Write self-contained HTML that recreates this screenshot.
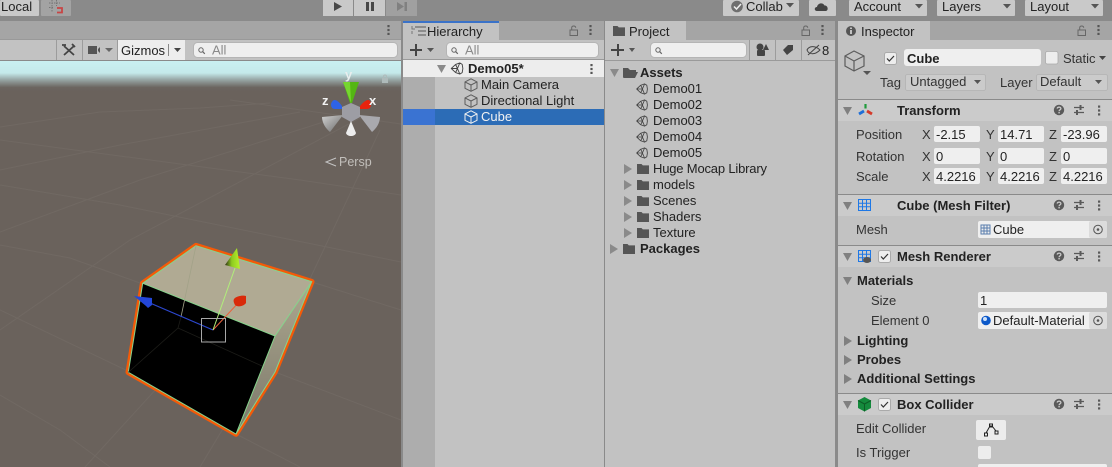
<!DOCTYPE html>
<html><head><meta charset="utf-8"><style>
html,body{margin:0;padding:0;background:#8a8a8a;width:1112px;height:467px;overflow:hidden}
svg{display:block;filter:blur(.3px)}
text{font-family:"Liberation Sans",sans-serif;font-size:13px;fill:#222}
.b{font-weight:bold}
.l{fill:#333}
.g{fill:#8a8a8a}
</style></head><body>
<svg width="1112" height="467" viewBox="0 0 1112 467" xmlns="http://www.w3.org/2000/svg">
<defs>
<linearGradient id="sky" x1="0" y1="0" x2="0" y2="1"><stop offset="0" stop-color="#c9f0f1"/><stop offset=".4" stop-color="#c4e9ea"/><stop offset=".62" stop-color="#98a7a6"/><stop offset=".88" stop-color="#6b6560"/><stop offset="1" stop-color="#6a625c"/></linearGradient>
<linearGradient id="side" x1="0" y1="0" x2="0" y2="1"><stop offset="0" stop-color="#ada78f"/><stop offset="1" stop-color="#7b786a"/></linearGradient>
<linearGradient id="gc" x1="0" y1="0" x2="1" y2="0"><stop offset="0" stop-color="#2f2f18"/><stop offset=".45" stop-color="#8ecb20"/><stop offset="1" stop-color="#b7f02c"/></linearGradient>
<linearGradient id="cone" x1="0" y1="0" x2="1" y2="1"><stop offset="0" stop-color="#d0d0d0"/><stop offset="1" stop-color="#6a6a6a"/></linearGradient>
<symbol id="cube" viewBox="0 0 14 14" overflow="visible"><path d="M7 .8 13 3.9V10.3L7 13.3 1 10.3V3.9ZM1 3.9 7 7 13 3.9M7 7V13.3" fill="none" stroke="#5c5c5c" stroke-width="1" stroke-linejoin="round"/></symbol>
<symbol id="unity" viewBox="0 0 14 14" overflow="visible"><path d="M.8 7 5.500 2.600 10 1 12.600 2.600 13.300 7 12.600 11.400 10 13 5.500 11.400ZM.8 7H7.500L10 1M7.500 7 10 13M5.500 2.600 7.500 7M5.500 11.400 7.500 7" fill="none" stroke="#444" stroke-width="1" stroke-linejoin="round"/></symbol>
<symbol id="folder" viewBox="0 0 12 10" overflow="visible"><path d="M0 0H4.500L5.800 1.400H12V10H0Z" fill="#555"/></symbol>
<symbol id="dots" viewBox="0 0 3 10" overflow="visible"><rect x=".4" y="0" width="2.200" height="2.200" fill="#555"/><rect x=".4" y="3.900" width="2.200" height="2.200" fill="#555"/><rect x=".4" y="7.800" width="2.200" height="2.200" fill="#555"/></symbol>
<symbol id="help" viewBox="0 0 30 14" overflow="visible">
<circle cx="5" cy="7" r="5.200" fill="#5a5a5a"/><path d="M3.200 5.600C3.400 3.600 6.900 3.600 6.900 5.600 6.900 6.900 5.100 6.800 5.100 8.200" fill="none" stroke="#cbcbcb" stroke-width="1.300"/><rect x="4.400" y="9" width="1.400" height="1.400" fill="#cbcbcb"/>
<path d="M20 4.500H30M20 9.500H30" stroke="#5a5a5a" stroke-width="1.300" fill="none"/><path d="M26.500 2V7M23 7V12" stroke="#5a5a5a" stroke-width="2" fill="none"/>
<rect x="44" y="2.500" width="2.200" height="2.200" fill="#5a5a5a"/><rect x="44" y="6.400" width="2.200" height="2.200" fill="#5a5a5a"/><rect x="44" y="10.300" width="2.200" height="2.200" fill="#5a5a5a"/></symbol>
<symbol id="lock" viewBox="0 0 10 12" overflow="visible"><rect x="1" y="5" width="7.500" height="5.500" fill="none" stroke="#666" stroke-width="1"/><path d="M2.700 5V2.800C2.700 .4 6.700 .4 6.700 2.800" fill="none" stroke="#666" stroke-width="1"/></symbol>
<symbol id="search" viewBox="0 0 12 8" overflow="visible"><circle cx="3" cy="3" r="2.200" fill="none" stroke="#666" stroke-width="1"/><path d="M4.600 4.600 6.800 6.800" stroke="#666" stroke-width="1.200"/></symbol>
<symbol id="mesh" viewBox="0 0 13 12" overflow="visible"><path d="M.5.5H12.500V11.500H.5ZM4.500.5V11.500M8.500.5V11.500M.5 4.200H12.500M.5 7.800H12.500" fill="none" stroke="#1e78e6" stroke-width="1"/></symbol>
<symbol id="check" viewBox="0 0 13 13" overflow="visible"><rect x=".5" y=".5" width="12" height="12" rx="2" fill="#ededed" stroke="#aaa"/><path d="M3 6.500 5.300 9 10 4" fill="none" stroke="#333" stroke-width="1.200"/></symbol>
</defs>

<!-- base -->
<rect width="1112" height="467" fill="#8a8a8a"/>

<!-- top toolbar -->
<rect x="0" y="0" width="39" height="16" rx="1" fill="#c9c9c9"/>
<text x="1" y="11">Local</text>
<rect x="41" y="0" width="30" height="16" rx="1" fill="#a3a3a3"/>
<path d="M52 0V12M56.500 0V6M49 3H60M49 7.500H54" stroke="#767676" stroke-width="1" stroke-dasharray="1.500 1"/>
<path d="M57 8H62V12.500H57" fill="none" stroke="#c84545" stroke-width="1.800"/>
<rect x="323" y="0" width="30" height="16" fill="#c9c9c9"/><rect x="354" y="0" width="31" height="16" fill="#c9c9c9"/><rect x="386" y="0" width="31" height="16" fill="#a0a0a0"/>
<path d="M334 2 342 6.500 334 11Z" fill="#484848"/><path d="M366 2H369V11H366ZM371 2H374V11H371Z" fill="#484848"/>
<path d="M397 2 404 6.500 397 11ZM404.500 2H407V11H404.500Z" fill="#808080"/>
<rect x="723" y="0" width="76" height="16" rx="1" fill="#c9c9c9"/>
<circle cx="737" cy="6.500" r="5.800" fill="#6f6f6f"/><path d="M734 6.500 736.500 9 741 4" fill="none" stroke="#eee" stroke-width="1.500"/>
<text x="746" y="11">Collab</text><path d="M786 3H794L790 7.500Z" fill="#555"/>
<rect x="809" y="0" width="27" height="16" rx="1" fill="#c9c9c9"/>
<path d="M817 11C814 11 814 7 817 7 817.500 3 823 2 824.500 5.500 828 5 829 11 825.500 11Z" fill="#444"/>
<rect x="849" y="0" width="78" height="16" rx="1" fill="#c9c9c9"/><text x="854" y="11">Account</text><path d="M915 4H923L919 8.500Z" fill="#555"/>
<rect x="937" y="0" width="78" height="16" rx="1" fill="#c9c9c9"/><text x="942" y="11">Layers</text><path d="M1003 4H1011L1007 8.500Z" fill="#555"/>
<rect x="1025" y="0" width="78" height="16" rx="1" fill="#c9c9c9"/><text x="1030" y="11">Layout</text><path d="M1091 4H1099L1095 8.500Z" fill="#555"/>

<!-- scene panel -->
<rect x="0" y="21" width="401" height="19" fill="#a5a5a5"/>
<rect x="0" y="39" width="401" height="21" fill="#c2c2c2"/>
<rect x="0" y="39" width="401" height="1" fill="#999"/>
<use href="#dots" x="387" y="25" width="3" height="10"/>
<rect x="56" y="40" width="1" height="20" fill="#9c9c9c"/><rect x="82" y="40" width="1" height="20" fill="#9c9c9c"/><rect x="117" y="40" width="1" height="20" fill="#9c9c9c"/>
<path d="M64 46 74 55M74 46 64 55" stroke="#444" stroke-width="1.800"/><path d="M62 45H66M72 44 75 47" stroke="#444" stroke-width="1.800"/>
<path d="M88 46H97V54H88ZM98 49 100 47V53L98 51Z" fill="#555"/><path d="M105 48H113L109 52Z" fill="#666"/>
<rect x="118" y="40" width="67" height="20" fill="#ededed"/>
<text x="121" y="55">Gizmos</text><rect x="168" y="44" width="1" height="12" fill="#888"/><path d="M174 48H181L177.500 52Z" fill="#444"/>
<rect x="193.500" y="42.500" width="204" height="15" rx="4" fill="#efefef" stroke="#b5b5b5"/>
<use href="#search" x="198" y="47" width="12" height="8"/>
<text x="212" y="54.500" class="g">All</text>

<!-- scene view -->
<rect x="0" y="61" width="401" height="406" fill="#6a625c"/>
<rect x="0" y="61" width="401" height="30" fill="url(#sky)"/>
<g stroke="#7a736d" stroke-width="1" fill="none" opacity=".4">
<path d="M0 127 100 112 200 108 270 103M0 170 120 145 300 112M0 232 140 180 330 120M0 330 130 240 360 118M85 467 210 330M200 467 300 300 380 130"/>
<path d="M0 140 300 180 401 195M0 185 120 205 401 262M0 245 70 258 140 283M0 310 130 372M0 395 60 430 110 467M312 282 401 310M275 372 401 420M236 434 300 467M230 100 401 124"/>
</g>
<path d="M383.500 78V76.500C383.500 74.500 386.500 74.500 386.500 76.500V78" fill="none" stroke="#aebaba" stroke-width="1"/><rect x="382" y="78" width="6" height="5" fill="#aebaba"/>

<!-- orientation gizmo -->
<path d="M343 82H359L352 103H350Z" fill="#54b613"/><path d="M343 82H350L351 103Z" fill="#76d630"/>
<path d="M331 104C333 98 337 99 342 106V109H335C332 109 331 107 331 104Z" fill="#2f63e6"/>
<path d="M371 104C370 98 366 99 360 106V109H367C370 109 371 107 371 104Z" fill="#e8230e"/>
<path d="M342 107 351 103 360 107V117L351 122 342 117Z" fill="#9d9da4"/>
<path d="M322 117 343 115 330 132C325 128 322 122 322 117Z" fill="url(#cone)"/>
<path d="M380 117 359 115 372 132C377 128 380 122 380 117Z" fill="#a9a9ae"/>
<path d="M351 121 356 133C355 137 347 137 346 133Z" fill="#ededed"/>
<text x="345" y="79" class="b" style="fill:#e8eeee">y</text>
<text x="322" y="105" class="b" style="fill:#f2f2f2">z</text>
<text x="369" y="105" class="b" style="fill:#f2f2f2">x</text>
<path d="M336 158 326 162 336 166" fill="none" stroke="#c4c4c4" stroke-width="1"/>
<text x="339" y="166" style="fill:#c2bfbb;font-size:12.500px">Persp</text>

<!-- selected cube -->
<path d="M196 245.700 311.700 281.700 275 372 236 434 128.300 372.300 142.700 283.300Z" fill="#a8a48e" stroke="#f45a08" stroke-width="5.600" stroke-linejoin="round"/>
<path d="M196 245.700 311.700 281.700 275 336 142.700 283.300Z" fill="#b0aa93"/>
<path d="M311.700 281.700 275 336 236 434 275 372Z" fill="url(#side)"/>
<path d="M142.700 283.300 275 336 236 434 128.300 372.300Z" fill="#000"/>
<path d="M196 245.700 311.700 281.700 275 336 142.700 283.300ZM275 336 236 434 128.300 372.300 142.700 283.300M311.700 281.700 275 372 236 434" fill="none" stroke="#86d48c" stroke-width="1"/>
<path d="M196 245.700 181 317" stroke="#a2a288" stroke-width=".8" fill="none"/>
<path d="M181 317 178 328 128.300 372.300M178 328 262 366" stroke="#1c1c18" stroke-width=".8" fill="none"/>
<path d="M213 330 240 301" stroke="#e8623e" stroke-width="1"/>
<path d="M213 330 150 303" stroke="#2c48d0" stroke-width="1.200"/>
<path d="M213 330 235 268" stroke="#b0f07a" stroke-width="1"/>
<rect x="201.500" y="318.500" width="24" height="23.500" fill="none" stroke="#a8a8a8" stroke-width="1"/>
<path d="M237 248 240 269 225 265Z" fill="url(#gc)"/>
<path d="M234 299C236 296 243 295 246 296V303C243 307 237 307 235 305 234 303 233 301 234 299Z" fill="#d92a0a"/>
<path d="M134 296 152 298V305L148 308 146 306Z" fill="#2346d8"/>

<!-- hierarchy -->
<rect x="403" y="21" width="201" height="19" fill="#a5a5a5"/>
<rect x="403" y="21" width="96" height="19" fill="#c2c2c2"/>
<rect x="403" y="21" width="96" height="2" fill="#3a72c8"/>
<path d="M415 27H426M418 31H426M418 35H426" stroke="#555" stroke-width="1"/><path d="M412 26V29H415M412 31V34" stroke="#777" fill="none"/>
<text x="427" y="36">Hierarchy</text>
<use href="#lock" x="569" y="25" width="10" height="12"/><use href="#dots" x="589" y="25" width="3" height="10"/>
<rect x="403" y="40" width="201" height="427" fill="#c2c2c2"/>
<rect x="403" y="59" width="201" height="1" fill="#9a9a9a"/>
<path d="M416 44V56M410 50H422" stroke="#444" stroke-width="2"/><path d="M427 48H434L430.500 52Z" fill="#555"/>
<rect x="446.500" y="42.500" width="152" height="15" rx="4" fill="#efefef" stroke="#b5b5b5"/>
<use href="#search" x="451" y="47" width="12" height="8"/><text x="465" y="54.500" class="g">All</text>
<rect x="403" y="77" width="32" height="390" fill="#adadad"/>
<rect x="403" y="60" width="201" height="17" fill="#ededed"/>
<path d="M437 65H446L441.500 73Z" fill="#8a8a8a"/>
<use href="#unity" x="450" y="62" width="14" height="13"/>
<text x="468" y="73" class="b">Demo05*</text>
<use href="#dots" x="590" y="64" width="3" height="10"/>
<use href="#cube" x="464" y="78" width="14" height="14"/><text x="481" y="89">Main Camera</text>
<use href="#cube" x="464" y="94" width="14" height="14"/><text x="481" y="105">Directional Light</text>
<rect x="403" y="109" width="32" height="16" fill="#3a73d2"/><rect x="435" y="109" width="169" height="16" fill="#2c6cb6"/>
<path d="M471 110.800 477 113.900V120.300L471 123.300 465 120.300V113.900ZM465 113.900 471 117 477 113.900M471 117V123.300" fill="none" stroke="#f0f0f0" stroke-width="1"/>
<text x="481" y="121" style="fill:#f2f2f2">Cube</text>

<!-- project -->
<rect x="605" y="21" width="230" height="19" fill="#a5a5a5"/>
<rect x="605" y="21" width="81" height="19" fill="#c2c2c2"/>
<use href="#folder" x="613" y="26" width="12" height="10"/>
<text x="629" y="36">Project</text>
<use href="#lock" x="801" y="25" width="10" height="12"/><use href="#dots" x="821" y="25" width="3" height="10"/>
<rect x="605" y="40" width="230" height="427" fill="#c2c2c2"/>
<rect x="605" y="60" width="230" height="1" fill="#9a9a9a"/>
<path d="M618 44V56M611 50H624" stroke="#444" stroke-width="2"/><path d="M629 48H635L632 52Z" fill="#555"/>
<rect x="650.500" y="42.500" width="96" height="15" rx="4" fill="#efefef" stroke="#b5b5b5"/>
<use href="#search" x="655" y="47" width="12" height="8"/>
<rect x="749" y="40" width="1" height="20" fill="#9c9c9c"/><rect x="775" y="40" width="1" height="20" fill="#9c9c9c"/><rect x="801" y="40" width="1" height="20" fill="#9c9c9c"/>
<circle cx="760" cy="47" r="3.500" fill="#444"/><rect x="757" y="50" width="8" height="6" rx="1" fill="#444"/><path d="M763 50 766 44 769 50Z" fill="#444"/>
<path d="M783 50 788 45H793V50L787 55Z" fill="#444"/>
<path d="M807 50C809 46 815 45 820 50 815 55 809 55 807 50ZM808 55 819 45" fill="none" stroke="#444" stroke-width="1"/>
<text x="822" y="55">8</text>
<path d="M610 69H619L614.500 77Z" fill="#8a8a8a"/>
<path d="M623 68H628L630 70H636V72H627L625 77H623ZM626 72H638L635 78H623Z" fill="#555"/>
<text x="640" y="77" class="b">Assets</text>
<g>
<use href="#unity" x="636" y="83" width="12" height="12"/><text x="653" y="93">Demo01</text>
<use href="#unity" x="636" y="99" width="12" height="12"/><text x="653" y="109">Demo02</text>
<use href="#unity" x="636" y="115" width="12" height="12"/><text x="653" y="125">Demo03</text>
<use href="#unity" x="636" y="131" width="12" height="12"/><text x="653" y="141">Demo04</text>
<use href="#unity" x="636" y="147" width="12" height="12"/><text x="653" y="157">Demo05</text>
</g>
<g fill="#8a8a8a">
<path d="M624 164 632 169 624 174Z"/><path d="M624 180 632 185 624 190Z"/><path d="M624 196 632 201 624 206Z"/><path d="M624 212 632 217 624 222Z"/><path d="M624 228 632 233 624 238Z"/><path d="M610 244 618 249 610 254Z"/>
</g>
<use href="#folder" x="637" y="164" width="12" height="10"/><text x="653" y="173" textLength="114">Huge Mocap Library</text>
<use href="#folder" x="637" y="180" width="12" height="10"/><text x="653" y="189">models</text>
<use href="#folder" x="637" y="196" width="12" height="10"/><text x="653" y="205">Scenes</text>
<use href="#folder" x="637" y="212" width="12" height="10"/><text x="653" y="221">Shaders</text>
<use href="#folder" x="637" y="228" width="12" height="10"/><text x="653" y="237">Texture</text>
<use href="#folder" x="623" y="244" width="12" height="10"/><text x="640" y="253" class="b">Packages</text>

<!-- inspector -->
<rect x="838" y="21" width="274" height="19" fill="#a5a5a5"/>
<rect x="838" y="21" width="92" height="19" fill="#c2c2c2"/>
<circle cx="851" cy="31" r="5" fill="#555"/><rect x="850" y="30" width="2" height="4" fill="#c2c2c2"/><rect x="850" y="27.500" width="2" height="1.500" fill="#c2c2c2"/>
<text x="861" y="36">Inspector</text>
<use href="#lock" x="1077" y="25" width="10" height="12"/><use href="#dots" x="1097" y="25" width="3" height="10"/>
<rect x="838" y="40" width="274" height="427" fill="#c2c2c2"/>

<path d="M854 51 864 56V66L854 71 845 66V56ZM845 56 854 61 864 56M854 61V71" fill="none" stroke="#5c5c5c" stroke-width="1.200"/>
<path d="M863 71H871L867 75Z" fill="#555"/>
<use href="#check" x="884" y="52" width="13" height="13"/>
<rect x="904" y="49" width="137" height="17" rx="3" fill="#efefef"/><text x="907" y="63" class="b">Cube</text>
<rect x="1045.500" y="51.500" width="12.500" height="12.500" rx="2" fill="#ededed" stroke="#aaa" stroke-width=".8"/>
<text x="1063" y="63" class="l">Static</text><path d="M1099 56H1106L1102.500 60Z" fill="#444"/>
<text x="880" y="87" class="l">Tag</text>
<rect x="905.500" y="74.500" width="80" height="16" rx="2" fill="#cbcbcb" stroke="#b2b2b2" stroke-width=".8"/><text x="910" y="86" class="l">Untagged</text><path d="M974 80H981L977.500 84Z" fill="#555"/>
<text x="1000" y="87" class="l">Layer</text>
<rect x="1036.500" y="74.500" width="71" height="16" rx="2" fill="#cbcbcb" stroke="#b2b2b2" stroke-width=".8"/><text x="1040" y="86" class="l">Default</text><path d="M1095 80H1102L1098.500 84Z" fill="#555"/>

<!-- separators + headers -->
<rect x="838" y="99" width="274" height="1" fill="#8a8a8a"/>
<rect x="838" y="100" width="274" height="21" fill="#cbcbcb"/>
<rect x="838" y="194" width="274" height="1" fill="#8a8a8a"/>
<rect x="838" y="195" width="274" height="21" fill="#cbcbcb"/>
<rect x="838" y="245" width="274" height="1" fill="#8a8a8a"/>
<rect x="838" y="246" width="274" height="21" fill="#cbcbcb"/>
<rect x="838" y="393" width="274" height="1" fill="#8a8a8a"/>
<rect x="838" y="394" width="274" height="21" fill="#cbcbcb"/>
<g fill="#808080"><path d="M843 107H852L847.500 115Z"/><path d="M843 202H852L847.500 210Z"/><path d="M843 253H852L847.500 261Z"/><path d="M843 401H852L847.500 409Z"/><path d="M843 277H852L847.500 285Z"/></g>

<!-- transform -->
<path d="M865.500 104V108.500" stroke="#1f9a3c" stroke-width="2.200"/><path d="M864 111 859 114" stroke="#1f6fd8" stroke-width="2.800"/><path d="M867 111 872 114" stroke="#d43a2a" stroke-width="2.800"/>
<text x="897" y="115" class="b">Transform</text>
<use href="#help" x="1054" y="103" width="30" height="14"/>
<text x="856" y="139" class="l">Position</text><text x="856" y="161" class="l">Rotation</text><text x="856" y="181" class="l">Scale</text>
<g class="l">
<text x="922" y="139" class="l">X</text><text x="986" y="139" class="l">Y</text><text x="1049" y="139" class="l">Z</text>
<text x="922" y="161" class="l">X</text><text x="986" y="161" class="l">Y</text><text x="1049" y="161" class="l">Z</text>
<text x="922" y="181" class="l">X</text><text x="986" y="181" class="l">Y</text><text x="1049" y="181" class="l">Z</text>
</g>
<g fill="#efefef">
<rect x="934" y="126" width="46" height="16" rx="2"/><rect x="998" y="126" width="46" height="16" rx="2"/><rect x="1061" y="126" width="46" height="16" rx="2"/>
<rect x="934" y="148" width="46" height="16" rx="2"/><rect x="998" y="148" width="46" height="16" rx="2"/><rect x="1061" y="148" width="46" height="16" rx="2"/>
<rect x="934" y="168" width="46" height="16" rx="2"/><rect x="998" y="168" width="46" height="16" rx="2"/><rect x="1061" y="168" width="46" height="16" rx="2"/>
</g>
<text x="936" y="139">-2.15</text><text x="1000" y="139">14.71</text><text x="1063" y="139">-23.96</text>
<text x="936" y="161">0</text><text x="1000" y="161">0</text><text x="1063" y="161">0</text>
<text x="936" y="181">4.2216</text><text x="1000" y="181">4.2216</text><text x="1063" y="181">4.2216</text>

<!-- mesh filter -->
<use href="#mesh" x="858" y="199" width="13" height="12"/>
<text x="897" y="210" class="b">Cube (Mesh Filter)</text>
<use href="#help" x="1054" y="198" width="30" height="14"/>
<text x="856" y="234" class="l">Mesh</text>
<rect x="978" y="221" width="129" height="17" rx="2" fill="#efefef"/><rect x="1089" y="221" width="18" height="17" rx="2" fill="#dcdcdc"/>
<path d="M981 225H990V234H981ZM984 225V234M987 225V234M981 228H990M981 231H990" fill="none" stroke="#5a7eae" stroke-width="1"/>
<text x="993" y="234">Cube</text>
<circle cx="1098" cy="229.500" r="4.300" fill="none" stroke="#555"/><circle cx="1098" cy="229.500" r="1.300" fill="#555"/>

<!-- mesh renderer -->
<use href="#mesh" x="858" y="250" width="13" height="12"/><ellipse cx="867" cy="260" rx="4" ry="3" fill="#555"/>
<use href="#check" x="878" y="250" width="13" height="13"/>
<text x="897" y="261" class="b">Mesh Renderer</text>
<use href="#help" x="1054" y="249" width="30" height="14"/>
<text x="857" y="285" class="b">Materials</text>
<text x="871" y="305" class="l">Size</text>
<rect x="978" y="292" width="129" height="16" rx="2" fill="#efefef"/><text x="980" y="305">1</text>
<text x="871" y="325" class="l">Element 0</text>
<rect x="978" y="312" width="129" height="17" rx="2" fill="#efefef"/><rect x="1089" y="312" width="18" height="17" rx="2" fill="#dcdcdc"/>
<circle cx="986" cy="320.500" r="4.800" fill="#0d59c9"/><circle cx="985" cy="319" r="2" fill="#cfe2fa"/>
<text x="993" y="325">Default-Material</text>
<circle cx="1098" cy="320.500" r="4.300" fill="none" stroke="#555"/><circle cx="1098" cy="320.500" r="1.300" fill="#555"/>
<g fill="#808080"><path d="M844 336 852 341 844 346Z"/><path d="M844 355 852 360 844 365Z"/><path d="M844 374 852 379 844 384Z"/></g>
<text x="857" y="345" class="b">Lighting</text><text x="857" y="364" class="b">Probes</text><text x="857" y="383" class="b">Additional Settings</text>

<!-- box collider -->
<path d="M864.500 397 871 400.500V408L864.500 411.500 858 408V400.500Z" fill="#148a3c"/><path d="M858 400.500 864.500 404 871 400.500M864.500 404V411.500" fill="none" stroke="#0d5c26"/>
<use href="#check" x="878" y="398" width="13" height="13"/>
<text x="897" y="409" class="b">Box Collider</text>
<use href="#help" x="1054" y="397" width="30" height="14"/>
<text x="856" y="433" class="l">Edit Collider</text>
<rect x="976" y="420" width="30" height="20" rx="2" fill="#ececec"/>
<path d="M986 433 990 426H992L996 431" fill="none" stroke="#222"/><rect x="984.500" y="433" width="3" height="3" fill="none" stroke="#222"/><rect x="989.500" y="424" width="3" height="3" fill="none" stroke="#222"/><rect x="995" y="431" width="3" height="3" fill="none" stroke="#222"/>
<text x="856" y="457" class="l">Is Trigger</text>
<rect x="978" y="446" width="13" height="13" rx="2" fill="#ededed"/>
<rect x="978" y="464" width="129" height="8" rx="2" fill="#efefef"/>
</svg>
</body></html>
